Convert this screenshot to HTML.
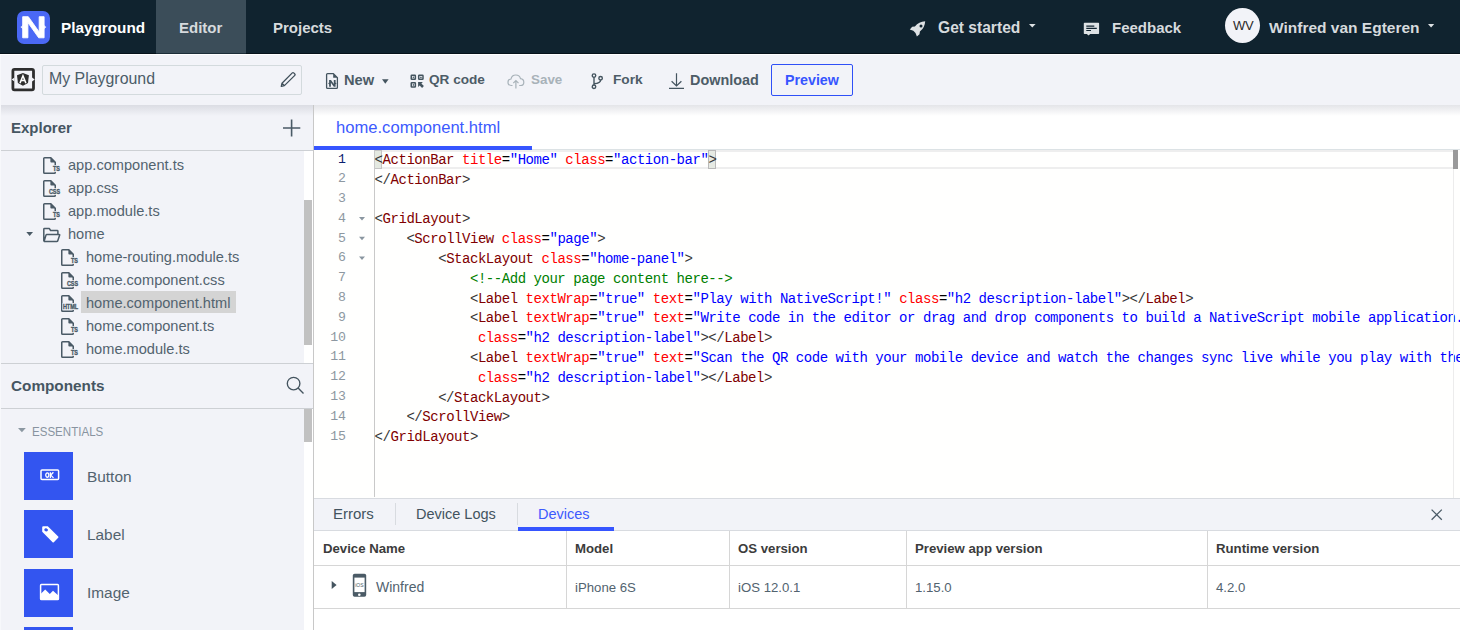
<!DOCTYPE html>
<html><head><meta charset="utf-8">
<style>
*{box-sizing:border-box;margin:0;padding:0}
html,body{width:1460px;height:630px;overflow:hidden;background:#f2f3f8;font-family:"Liberation Sans",sans-serif}
.a{position:absolute}
.t{position:absolute;white-space:pre;line-height:20px}
svg{position:absolute;overflow:visible}
.navtxt{color:#d6dadd;font-weight:700;font-size:15px}
.tbtxt{color:#4d5c67;font-weight:700;font-size:14.2px}
.sidehdr{color:#465662;font-weight:700;font-size:15px}
.file{color:#52636f;font-size:14.6px;position:absolute;white-space:pre;line-height:20px}
.code{font-family:"Liberation Mono",monospace;font-size:14px;letter-spacing:-0.455px;line-height:19.8px;white-space:pre;position:absolute}
.tg{color:#800000}.dl{color:#383838}.an{color:#ff0000}.av{color:#0000ff}.cm{color:#008000}.eq{color:#000}
.ln{font-family:"Liberation Mono",monospace;font-size:13.2px;line-height:19.8px;position:absolute;text-align:right;color:#8d98a1}
.tabtxt{font-size:14.5px;color:#43535f}
.th{font-size:13.2px;font-weight:700;color:#3c3c3c}
.td{font-size:13.2px;color:#52636f}
.vl{position:absolute;width:1px;background:#d6d6d6}
.hl{position:absolute;height:1px;background:#d6d6d6}
</style></head>
<body>
<!-- ============ HEADER ============ -->
<div class="a" style="left:0;top:0;width:1460px;height:53px;background:#10232f"></div>
<div class="a" style="left:0;top:53px;width:1460px;height:1px;background:#06121a"></div>
<div class="a" style="left:0;top:54px;width:1460px;height:1px;background:#fff"></div>
<div class="a" style="left:156px;top:0;width:90px;height:53px;background:#3b4d59"></div>
<div class="a" style="left:156px;top:53px;width:90px;height:1px;background:#1c2d38"></div>
<div class="a" style="left:17px;top:11px;width:33px;height:33px;border-radius:7px;background:#4a68f5"></div>
<svg style="left:17px;top:11px" width="33" height="33" viewBox="0 0 33 33">
  <path d="M5.7 5.7H11.3L22.2 21V5.7H27.1V26.8H21.7L10.9 11.6V26.8H5.7Z" fill="#fff" stroke="#fff" stroke-width="0.9" stroke-linejoin="round"/>
  <path d="M5.6 13.8Q5 15.6 3.4 16.1Q5 16.6 5.6 18.6Z M27.2 13.8Q27.8 15.6 29.4 16.1Q27.8 16.6 27.2 18.6Z" fill="#fff"/>
</svg>
<div class="t navtxt" style="left:61px;top:18px;color:#fff;font-size:15.3px">Playground</div>
<div class="t navtxt" style="left:179px;top:18px">Editor</div>
<div class="t navtxt" style="left:273px;top:18px">Projects</div>
<!-- rocket -->
<svg style="left:909px;top:21px" width="17" height="16" viewBox="0 0 17 16">
  <path d="M16.2 0.2Q15.9 6.6 10.9 10.6L10.5 13.2L7.9 15.6L6.5 11.9L4.3 9.7L0.8 8.4L3.2 5.8L5.9 5.5Q9.8 0.5 16.2 0.2Z" fill="#dde1e4"/>
  <circle cx="12" cy="4.9" r="1.5" fill="#10232f"/>
</svg>
<div class="t navtxt" style="left:938px;top:18px;font-size:15.6px">Get started</div>
<svg style="left:1029px;top:24px" width="7" height="4" viewBox="0 0 7 4"><path d="M0 0H6.6L3.3 3.6Z" fill="#dde1e4"/></svg>
<!-- feedback icon -->
<svg style="left:1083px;top:22px" width="17" height="14" viewBox="0 0 17 14">
  <path d="M1.5 0.8H15.4Q16.1 0.8 16.1 1.5V11.3Q16.1 12 15.4 12H7.2L5.5 13.5L3.9 12H1.5Q0.8 12 0.8 11.3V1.5Q0.8 0.8 1.5 0.8Z" fill="#dde1e4"/>
  <path d="M3.3 4.1H11.3M3.3 6.4H13.8M3.3 8.5H8" stroke="#10232f" stroke-width="1.1"/>
</svg>
<div class="t navtxt" style="left:1112px;top:18px">Feedback</div>
<div class="a" style="left:1225px;top:8px;width:35px;height:35px;border-radius:50%;background:#f2f3f8"></div>
<div class="t" style="left:1233px;top:15.5px;font-size:13px;color:#2a2a2a;letter-spacing:-0.3px">WV</div>
<div class="t navtxt" style="left:1269px;top:18px;font-size:15.5px">Winfred van Egteren</div>
<svg style="left:1428px;top:24px" width="7" height="4" viewBox="0 0 7 4"><path d="M0 0H6.2L3.1 3.6Z" fill="#dde1e4"/></svg>

<!-- ============ TOOLBAR ============ -->
<svg style="left:11px;top:68px" width="25" height="25" viewBox="0 0 25 25">
  <rect x="1.9" y="1.4" width="20.6" height="20.5" rx="1.6" fill="none" stroke="#2e2e2e" stroke-width="2.8"/>
  <path d="M0.7 11.6L3.4 9.6V13.6Z M23.7 11.6L21 9.6V13.6Z" fill="#f2f3f8"/>
  <path d="M11.95 5.1L17.9 7.2L17 15L11.95 17.8L6.9 15L6 7.2Z" fill="#2e2e2e"/>
  <path d="M9 15.1L11.95 7.8L14.9 15.1 M10.2 12.6H13.7" fill="none" stroke="#fff" stroke-width="1.5"/>
</svg>
<div class="a" style="left:42px;top:65px;width:260px;height:30px;border:1px solid #d3dadd;border-radius:2px;background:#f2f3f8"></div>
<div class="t" style="left:49px;top:69px;font-size:15.9px;color:#4b5c68">My Playground</div>
<svg style="left:279px;top:71px" width="18" height="17" viewBox="0 0 18 17">
  <path d="M2.3 15.3L3 12.2L13.3 1.9Q14 1.2 14.7 1.9L15.8 3Q16.5 3.7 15.8 4.4L5.4 14.6Z M3 12.2L5.4 14.6" fill="none" stroke="#3f4f5a" stroke-width="1.3" stroke-linejoin="round"/>
</svg>
<!-- New -->
<svg style="left:325px;top:72px" width="14" height="18" viewBox="0 0 14 18">
  <path d="M2.6 1.6H8.4L12.4 5.6V15.4Q12.4 16.4 11.4 16.4H2.6Q1.6 16.4 1.6 15.4V2.6Q1.6 1.6 2.6 1.6Z" fill="none" stroke="#44545f" stroke-width="1.3" stroke-linejoin="round"/>
  <path d="M8.2 1.6L12.4 5.8H8.2Z" fill="#44545f"/>
  <path d="M4.1 8H6L8.8 12.1V8H10.6V14.8H8.8L5.9 10.7V14.8H4.1Z M4.1 10.5L3.1 11.4L4.1 12.3Z M10.6 10.5L11.6 11.4L10.6 12.3Z" fill="#44545f"/>
</svg>
<div class="t tbtxt" style="left:344px;top:70px;font-size:14.7px">New</div>
<svg style="left:382px;top:78.5px" width="7" height="5" viewBox="0 0 7 5"><path d="M0 0.2H6.6L3.3 4.8Z" fill="#44545f"/></svg>
<!-- QR -->
<svg style="left:410px;top:74px" width="15" height="15" viewBox="0 0 15 15">
  <g fill="none" stroke="#44545f" stroke-width="1.5">
   <rect x="1.25" y="1.25" width="4.1" height="4.1" rx="0.6"/><rect x="8.7" y="1.25" width="4.3" height="4.1" rx="0.6"/><rect x="1.25" y="8.7" width="4.1" height="4.3" rx="0.6"/>
   <path d="M10 3.3H11.8 M3.3 10V11.9" stroke-width="1"/>
  </g>
  <circle cx="3.3" cy="3.3" r="0.75" fill="#44545f"/>
  <path d="M8.1 8.1H12.9L11.4 9.6L13.9 12.1L12.1 13.9L9.6 11.4L8.1 12.9Z" fill="#44545f"/>
</svg>
<div class="t tbtxt" style="left:429px;top:70px;font-size:13.6px">QR code</div>
<!-- Save -->
<svg style="left:507px;top:73px" width="18" height="16" viewBox="0 0 18 16">
  <path d="M5.5 12.5H4.5Q1 12.5 1 9.2Q1 6.3 4 6Q4.8 2 8.8 2Q12.6 2 13.5 5.6Q16.8 6 16.8 9.2Q16.8 12.5 13.5 12.5H12.2" fill="none" stroke="#a8b2b9" stroke-width="1.2"/>
  <path d="M8.9 15.5V7.6 M6.3 10.2L8.9 7.6L11.5 10.2" fill="none" stroke="#a8b2b9" stroke-width="1.2"/>
</svg>
<div class="t tbtxt" style="left:531px;top:70px;font-size:13.4px;color:#a8b2b9">Save</div>
<!-- Fork -->
<svg style="left:591px;top:72px" width="13" height="18" viewBox="0 0 13 18">
  <g fill="none" stroke="#44545f" stroke-width="1.4">
  <circle cx="3" cy="3.6" r="1.75"/><circle cx="3" cy="14.8" r="1.75"/><circle cx="9.6" cy="6.3" r="1.75"/>
  <path d="M3 5.3V13.1 M9.6 8Q9.6 11.4 3.1 11.6"/></g>
</svg>
<div class="t tbtxt" style="left:613px;top:70px;font-size:13.7px">Fork</div>
<!-- Download -->
<svg style="left:668px;top:72px" width="17" height="18" viewBox="0 0 17 18">
  <path d="M8.5 1.2V14 M3.6 9.2L8.5 14L13.4 9.2 M1 16.4H16" fill="none" stroke="#44545f" stroke-width="1.2"/>
</svg>
<div class="t tbtxt" style="left:690px;top:70px;font-size:14.4px">Download</div>
<div class="a" style="left:771px;top:64px;width:82px;height:32px;border:1px solid #2f50f7;border-radius:2px"></div>
<div class="t tbtxt" style="left:785px;top:70px;font-size:14.26px;color:#3655ff">Preview</div>
<div class="a" style="left:0;top:105px;width:1460px;height:11px;background:linear-gradient(rgba(200,202,210,0.55),rgba(242,243,248,0))"></div>

<!-- ============ SIDEBAR ============ -->
<div class="t sidehdr" style="left:11px;top:118px">Explorer</div>
<svg style="left:283px;top:119px" width="18" height="18" viewBox="0 0 18 18"><path d="M8.6 0.5V17.5 M0 9H17.3" stroke="#4a5a66" stroke-width="1.6"/></svg>
<div class="hl" style="left:0;top:150px;width:313px;background:#cdd0d4"></div>
<!-- tree -->
<div class="a" style="left:304px;top:151px;width:9px;height:212px;background:#fff"></div>
<div class="a" style="left:304px;top:200px;width:8px;height:145px;background:#c1c1c1"></div>
<div class="a" style="left:81px;top:291px;width:155px;height:22px;background:#d4d4d4"></div>
<svg style="left:43.2px;top:157px" width="18" height="18" viewBox="0 0 18 18">
  <path d="M12.25 9V5.2L7.8 0.75H1.6Q0.75 0.75 0.75 1.6V15.4Q0.75 16.25 1.6 16.25H11.4Q12.25 16.25 12.25 15.4V14.5" fill="none" stroke="#4a5a66" stroke-width="1.5"/>
  <path d="M7.4 0.3L12.7 5.6H8.2Q7.4 5.6 7.4 4.8Z" fill="#4a5a66"/>
  <text x="10.0" y="13.9" textLength="7.0" lengthAdjust="spacingAndGlyphs" font-family="Liberation Sans" font-weight="700" font-size="6.4" fill="#f2f3f8" stroke="#f2f3f8" stroke-width="1.8">TS</text>
  <text x="10.0" y="13.9" textLength="7.0" lengthAdjust="spacingAndGlyphs" font-family="Liberation Sans" font-weight="700" font-size="6.4" fill="#4a5a66" stroke="#4a5a66" stroke-width="0.35">TS</text>
</svg>
<div class="file" style="left:68px;top:155px">app.component.ts</div>
<svg style="left:43.2px;top:180px" width="18" height="18" viewBox="0 0 18 18">
  <path d="M12.25 9V5.2L7.8 0.75H1.6Q0.75 0.75 0.75 1.6V15.4Q0.75 16.25 1.6 16.25H11.4Q12.25 16.25 12.25 15.4V14.5" fill="none" stroke="#4a5a66" stroke-width="1.5"/>
  <path d="M7.4 0.3L12.7 5.6H8.2Q7.4 5.6 7.4 4.8Z" fill="#4a5a66"/>
  <text x="5.9" y="14.0" textLength="11.2" lengthAdjust="spacingAndGlyphs" font-family="Liberation Sans" font-weight="700" font-size="6.4" fill="#f2f3f8" stroke="#f2f3f8" stroke-width="1.8">CSS</text>
  <text x="5.9" y="14.0" textLength="11.2" lengthAdjust="spacingAndGlyphs" font-family="Liberation Sans" font-weight="700" font-size="6.4" fill="#4a5a66" stroke="#4a5a66" stroke-width="0.35">CSS</text>
</svg>
<div class="file" style="left:68px;top:178px">app.css</div>
<svg style="left:43.2px;top:203px" width="18" height="18" viewBox="0 0 18 18">
  <path d="M12.25 9V5.2L7.8 0.75H1.6Q0.75 0.75 0.75 1.6V15.4Q0.75 16.25 1.6 16.25H11.4Q12.25 16.25 12.25 15.4V14.5" fill="none" stroke="#4a5a66" stroke-width="1.5"/>
  <path d="M7.4 0.3L12.7 5.6H8.2Q7.4 5.6 7.4 4.8Z" fill="#4a5a66"/>
  <text x="10.0" y="13.9" textLength="7.0" lengthAdjust="spacingAndGlyphs" font-family="Liberation Sans" font-weight="700" font-size="6.4" fill="#f2f3f8" stroke="#f2f3f8" stroke-width="1.8">TS</text>
  <text x="10.0" y="13.9" textLength="7.0" lengthAdjust="spacingAndGlyphs" font-family="Liberation Sans" font-weight="700" font-size="6.4" fill="#4a5a66" stroke="#4a5a66" stroke-width="0.35">TS</text>
</svg>
<div class="file" style="left:68px;top:201px">app.module.ts</div>
<svg style="left:26px;top:232px" width="8" height="5" viewBox="0 0 8 5"><path d="M0.3 0H7L3.65 4Z" fill="#4a5a66"/></svg>
<svg style="left:43px;top:228.4px" width="19" height="15" viewBox="0 0 19 15">
  <path d="M0.8 13.1V1.3Q0.8 0.6 1.5 0.6H6.4L7.6 2.5H14.2Q14.9 2.5 14.9 3.2V6.3 M1.1 13.2L3 7.1Q3.2 6.5 3.9 6.5H16.2Q16.9 6.5 16.7 7.1L14.6 13.2Q14.4 13.6 13.8 13.6H1.6Q1 13.6 1.1 13.2Z" fill="none" stroke="#4a5a66" stroke-width="1.5" stroke-linejoin="round"/>
</svg>
<div class="file" style="left:68px;top:224px">home</div>
<svg style="left:61px;top:249px" width="18" height="18" viewBox="0 0 18 18">
  <path d="M12.25 9V5.2L7.8 0.75H1.6Q0.75 0.75 0.75 1.6V15.4Q0.75 16.25 1.6 16.25H11.4Q12.25 16.25 12.25 15.4V14.5" fill="none" stroke="#4a5a66" stroke-width="1.5"/>
  <path d="M7.4 0.3L12.7 5.6H8.2Q7.4 5.6 7.4 4.8Z" fill="#4a5a66"/>
  <text x="10.0" y="13.9" textLength="7.0" lengthAdjust="spacingAndGlyphs" font-family="Liberation Sans" font-weight="700" font-size="6.4" fill="#f2f3f8" stroke="#f2f3f8" stroke-width="1.8">TS</text>
  <text x="10.0" y="13.9" textLength="7.0" lengthAdjust="spacingAndGlyphs" font-family="Liberation Sans" font-weight="700" font-size="6.4" fill="#4a5a66" stroke="#4a5a66" stroke-width="0.35">TS</text>
</svg>
<div class="file" style="left:86px;top:247px">home-routing.module.ts</div>
<svg style="left:61px;top:272px" width="18" height="18" viewBox="0 0 18 18">
  <path d="M12.25 9V5.2L7.8 0.75H1.6Q0.75 0.75 0.75 1.6V15.4Q0.75 16.25 1.6 16.25H11.4Q12.25 16.25 12.25 15.4V14.5" fill="none" stroke="#4a5a66" stroke-width="1.5"/>
  <path d="M7.4 0.3L12.7 5.6H8.2Q7.4 5.6 7.4 4.8Z" fill="#4a5a66"/>
  <text x="5.9" y="14.0" textLength="11.2" lengthAdjust="spacingAndGlyphs" font-family="Liberation Sans" font-weight="700" font-size="6.4" fill="#f2f3f8" stroke="#f2f3f8" stroke-width="1.8">CSS</text>
  <text x="5.9" y="14.0" textLength="11.2" lengthAdjust="spacingAndGlyphs" font-family="Liberation Sans" font-weight="700" font-size="6.4" fill="#4a5a66" stroke="#4a5a66" stroke-width="0.35">CSS</text>
</svg>
<div class="file" style="left:86px;top:270px">home.component.css</div>
<svg style="left:61px;top:295px" width="18" height="18" viewBox="0 0 18 18">
  <path d="M12.25 9V5.2L7.8 0.75H1.6Q0.75 0.75 0.75 1.6V15.4Q0.75 16.25 1.6 16.25H11.4Q12.25 16.25 12.25 15.4V14.5" fill="none" stroke="#4a5a66" stroke-width="1.5"/>
  <path d="M7.4 0.3L12.7 5.6H8.2Q7.4 5.6 7.4 4.8Z" fill="#4a5a66"/>
  <text x="1.9" y="13.8" textLength="15.2" lengthAdjust="spacingAndGlyphs" font-family="Liberation Sans" font-weight="700" font-size="6.4" fill="#f2f3f8" stroke="#f2f3f8" stroke-width="1.8">HTML</text>
  <text x="1.9" y="13.8" textLength="15.2" lengthAdjust="spacingAndGlyphs" font-family="Liberation Sans" font-weight="700" font-size="6.4" fill="#4a5a66" stroke="#4a5a66" stroke-width="0.35">HTML</text>
</svg>
<div class="file" style="left:86px;top:293px">home.component.html</div>
<svg style="left:61px;top:318px" width="18" height="18" viewBox="0 0 18 18">
  <path d="M12.25 9V5.2L7.8 0.75H1.6Q0.75 0.75 0.75 1.6V15.4Q0.75 16.25 1.6 16.25H11.4Q12.25 16.25 12.25 15.4V14.5" fill="none" stroke="#4a5a66" stroke-width="1.5"/>
  <path d="M7.4 0.3L12.7 5.6H8.2Q7.4 5.6 7.4 4.8Z" fill="#4a5a66"/>
  <text x="10.0" y="13.9" textLength="7.0" lengthAdjust="spacingAndGlyphs" font-family="Liberation Sans" font-weight="700" font-size="6.4" fill="#f2f3f8" stroke="#f2f3f8" stroke-width="1.8">TS</text>
  <text x="10.0" y="13.9" textLength="7.0" lengthAdjust="spacingAndGlyphs" font-family="Liberation Sans" font-weight="700" font-size="6.4" fill="#4a5a66" stroke="#4a5a66" stroke-width="0.35">TS</text>
</svg>
<div class="file" style="left:86px;top:316px">home.component.ts</div>
<svg style="left:61px;top:341px" width="18" height="18" viewBox="0 0 18 18">
  <path d="M12.25 9V5.2L7.8 0.75H1.6Q0.75 0.75 0.75 1.6V15.4Q0.75 16.25 1.6 16.25H11.4Q12.25 16.25 12.25 15.4V14.5" fill="none" stroke="#4a5a66" stroke-width="1.5"/>
  <path d="M7.4 0.3L12.7 5.6H8.2Q7.4 5.6 7.4 4.8Z" fill="#4a5a66"/>
  <text x="10.0" y="13.9" textLength="7.0" lengthAdjust="spacingAndGlyphs" font-family="Liberation Sans" font-weight="700" font-size="6.4" fill="#f2f3f8" stroke="#f2f3f8" stroke-width="1.8">TS</text>
  <text x="10.0" y="13.9" textLength="7.0" lengthAdjust="spacingAndGlyphs" font-family="Liberation Sans" font-weight="700" font-size="6.4" fill="#4a5a66" stroke="#4a5a66" stroke-width="0.35">TS</text>
</svg>
<div class="file" style="left:86px;top:339px">home.module.ts</div>
<div class="hl" style="left:0;top:363px;width:313px;background:#cdd0d4"></div>
<div class="t sidehdr" style="left:11px;top:376px;font-size:15.3px">Components</div>
<svg style="left:285.5px;top:376px" width="19" height="19" viewBox="0 0 19 19"><circle cx="7.6" cy="7.6" r="6.3" fill="none" stroke="#44545f" stroke-width="1.35"/><path d="M12.1 12.1L17.5 17.5" stroke="#44545f" stroke-width="1.35"/></svg>
<div class="hl" style="left:0;top:408px;width:313px;background:#cdd0d4"></div>
<div class="a" style="left:304px;top:409px;width:9px;height:221px;background:#fff"></div>
<div class="a" style="left:304px;top:409px;width:8px;height:33px;background:#c1c1c1"></div>
<svg style="left:18px;top:428px" width="8" height="5" viewBox="0 0 8 5"><path d="M0 0H7.8L3.9 4.2Z" fill="#8c98a2"/></svg>
<div class="t" style="left:32.3px;top:421.5px;color:#8893a0;font-size:13.6px;transform:scaleX(0.85);transform-origin:0 0">ESSENTIALS</div>
<!-- tiles -->
<div class="a" style="left:24px;top:452px;width:49px;height:48px;background:#3355f0"></div>
<div class="a" style="left:24px;top:510px;width:49px;height:48px;background:#3355f0"></div>
<div class="a" style="left:24px;top:569px;width:49px;height:48px;background:#3355f0"></div>
<div class="a" style="left:24px;top:627px;width:49px;height:48px;background:#3355f0"></div>
<svg style="left:40px;top:469px" width="20" height="12" viewBox="0 0 20 12">
  <rect x="1" y="1" width="17.6" height="9.4" rx="1" fill="none" stroke="#fff" stroke-width="1.5"/>
  <ellipse cx="7.3" cy="6.1" rx="1.55" ry="2.15" fill="none" stroke="#fff" stroke-width="1.3"/><path d="M10.4 3.3V8.9 M13.4 3.3L10.8 6.1L13.5 8.9" fill="none" stroke="#fff" stroke-width="1.3"/>
</svg>
<svg style="left:41px;top:525px" width="19" height="19" viewBox="0 0 19 19">
  <path d="M2.2 1.2H6.8L17.2 11.6Q17.8 12.2 17.2 12.8L12.8 17.2Q12.2 17.8 11.6 17.2L1.2 6.8V2.2Q1.2 1.2 2.2 1.2Z M4.8 3.2A1.5 1.5 0 1 0 4.81 3.2Z" fill="#fff" fill-rule="evenodd"/>
  <circle cx="5.5" cy="5.1" r="1.4" fill="#3355f0"/>
</svg>
<svg style="left:39px;top:583px" width="21" height="18" viewBox="0 0 21 18">
  <rect x="1.6" y="1.6" width="17.8" height="15" rx="0.8" fill="none" stroke="#fff" stroke-width="1.5"/>
  <path d="M1.6 11L6.2 6.4L10.8 11L14 7.8L19.4 12.6V16.6H1.6Z" fill="#fff"/>
</svg>
<div class="t" style="left:87px;top:467px;font-size:15.4px;color:#52636f">Button</div>
<div class="t" style="left:87px;top:525px;font-size:15.4px;color:#52636f">Label</div>
<div class="t" style="left:87px;top:583px;font-size:15.4px;color:#52636f">Image</div>
<div class="vl" style="left:313px;top:105px;height:525px;background:#c8c8c8"></div>

<!-- ============ EDITOR ============ -->
<div class="a" style="left:314px;top:105px;width:1146px;height:44px;background:#fff"></div>
<div class="a" style="left:314px;top:105px;width:1146px;height:11px;background:linear-gradient(rgba(200,202,210,0.5),rgba(255,255,255,0))"></div>
<div class="t" style="left:336px;top:118px;font-size:16.6px;color:#3d5afe">home.component.html</div>
<div class="hl" style="left:532px;top:149px;width:928px;background:#dce2e5"></div>
<div class="a" style="left:314px;top:150px;width:1146px;height:348px;background:#fffffe"></div>
<!-- current line -->
<div class="a" style="left:374px;top:150px;width:1079px;height:19px;border-top:2px solid #eeeeee;border-bottom:2px solid #eeeeee"></div>
<div class="a" style="left:374px;top:150px;width:8px;height:19px;background:#e4e9e1;border:1px solid #c4c4c4"></div>
<div class="a" style="left:708px;top:150px;width:8px;height:19px;background:#e6eae3;border:1px solid #b9b9b9"></div>
<div class="ln" style="left:314px;top:149.5px;width:32px"><div style="color:#0b216f">1</div><div>2</div><div>3</div><div>4</div><div>5</div><div>6</div><div>7</div><div>8</div><div>9</div><div>10</div><div>11</div><div>12</div><div>13</div><div>14</div><div>15</div></div>
<svg style="left:358px;top:216px" width="8" height="45" viewBox="0 0 8 45">
  <path d="M1 1H7L4 4.5Z M1 20.8H7L4 24.3Z M1 40.6H7L4 44.1Z" fill="#8a96a0"/>
</svg>
<div class="vl" style="left:374px;top:150px;height:347px;background:#c9c9c9"></div>
<div class="code" style="left:374.6px;top:151px"><span class="dl">&lt;</span><span class="tg">ActionBar</span> <span class="an">title</span><span class="eq">=</span><span class="av">"Home"</span> <span class="an">class</span><span class="eq">=</span><span class="av">"action-bar"</span><span class="dl">&gt;</span>
<span class="dl">&lt;/</span><span class="tg">ActionBar</span><span class="dl">&gt;</span>

<span class="dl">&lt;</span><span class="tg">GridLayout</span><span class="dl">&gt;</span>
    <span class="dl">&lt;</span><span class="tg">ScrollView</span> <span class="an">class</span><span class="eq">=</span><span class="av">"page"</span><span class="dl">&gt;</span>
        <span class="dl">&lt;</span><span class="tg">StackLayout</span> <span class="an">class</span><span class="eq">=</span><span class="av">"home-panel"</span><span class="dl">&gt;</span>
            <span class="cm">&lt;!--Add your page content here--&gt;</span>
            <span class="dl">&lt;</span><span class="tg">Label</span> <span class="an">textWrap</span><span class="eq">=</span><span class="av">"true"</span> <span class="an">text</span><span class="eq">=</span><span class="av">"Play with NativeScript!"</span> <span class="an">class</span><span class="eq">=</span><span class="av">"h2 description-label"</span><span class="dl">&gt;&lt;/</span><span class="tg">Label</span><span class="dl">&gt;</span>
            <span class="dl">&lt;</span><span class="tg">Label</span> <span class="an">textWrap</span><span class="eq">=</span><span class="av">"true"</span> <span class="an">text</span><span class="eq">=</span><span class="av">"Write code in the editor or drag and drop components to build a NativeScript mobile application."</span>
             <span class="an">class</span><span class="eq">=</span><span class="av">"h2 description-label"</span><span class="dl">&gt;&lt;/</span><span class="tg">Label</span><span class="dl">&gt;</span>
            <span class="dl">&lt;</span><span class="tg">Label</span> <span class="an">textWrap</span><span class="eq">=</span><span class="av">"true"</span> <span class="an">text</span><span class="eq">=</span><span class="av">"Scan the QR code with your mobile device and watch the changes sync live while you play with the app."</span>
             <span class="an">class</span><span class="eq">=</span><span class="av">"h2 description-label"</span><span class="dl">&gt;&lt;/</span><span class="tg">Label</span><span class="dl">&gt;</span>
        <span class="dl">&lt;/</span><span class="tg">StackLayout</span><span class="dl">&gt;</span>
    <span class="dl">&lt;/</span><span class="tg">ScrollView</span><span class="dl">&gt;</span>
<span class="dl">&lt;/</span><span class="tg">GridLayout</span><span class="dl">&gt;</span></div>
<div class="vl" style="left:1453px;top:150px;height:348px;background:#ececec"></div>
<div class="a" style="left:314px;top:146px;width:218px;height:4px;background:#3655ff"></div>

<div class="a" style="left:1453px;top:150px;width:5px;height:19px;background:#9a9a9a"></div>

<!-- ============ PANEL ============ -->
<div class="a" style="left:314px;top:498px;width:1146px;height:132px;background:#fff"></div>
<div class="a" style="left:314px;top:499px;width:1146px;height:31px;background:#f2f3f8"></div>
<div class="hl" style="left:314px;top:498px;width:1146px;background:#d8dbe0"></div>
<div class="hl" style="left:314px;top:530px;width:1146px;background:#d8dbe0"></div>
<div class="t tabtxt" style="left:333px;top:504px;font-size:15px">Errors</div>
<div class="vl" style="left:395px;top:503px;height:22px;background:#d8dbe0"></div>
<div class="t tabtxt" style="left:416px;top:504px">Device Logs</div>
<div class="vl" style="left:517px;top:503px;height:22px;background:#d8dbe0"></div>
<div class="t tabtxt" style="left:538px;top:504px;color:#3d5afe">Devices</div>
<div class="a" style="left:518px;top:527px;width:96px;height:4px;background:#3655ff"></div>
<svg style="left:1431px;top:509px" width="12" height="12" viewBox="0 0 12 12"><path d="M0.6 0.6L10.8 10.8M10.8 0.6L0.6 10.8" stroke="#4a5a66" stroke-width="1.3"/></svg>
<div class="t th" style="left:323px;top:539px">Device Name</div>
<div class="t th" style="left:575px;top:539px">Model</div>
<div class="t th" style="left:738px;top:539px">OS version</div>
<div class="t th" style="left:915px;top:539px">Preview app version</div>
<div class="t th" style="left:1216px;top:539px">Runtime version</div>
<div class="hl" style="left:314px;top:565px;width:1146px"></div>
<div class="hl" style="left:314px;top:608px;width:1146px"></div>
<div class="vl" style="left:566px;top:531px;height:77px"></div>
<div class="vl" style="left:729px;top:531px;height:77px"></div>
<div class="vl" style="left:906px;top:531px;height:77px"></div>
<div class="vl" style="left:1207px;top:531px;height:77px"></div>
<svg style="left:331px;top:580px" width="6" height="10" viewBox="0 0 6 10"><path d="M0.7 1L5.6 5L0.7 9Z" fill="#44545f"/></svg>
<svg style="left:352px;top:573px" width="15" height="25" viewBox="0 0 15 25">
  <rect x="0.8" y="0.8" width="13.4" height="23" rx="1.8" fill="#4b5b66"/>
  <rect x="2.4" y="4.6" width="10.2" height="14.5" fill="#fff"/>
  <circle cx="7.3" cy="21.8" r="1.3" fill="#fff"/>
  <text x="3.2" y="14" textLength="8.4" lengthAdjust="spacingAndGlyphs" font-family="Liberation Sans" font-size="5.6" fill="#4b5b66">iOS</text>
</svg>
<div class="t td" style="left:376px;top:577px;font-size:14px">Winfred</div>
<div class="t td" style="left:575px;top:578px">iPhone 6S</div>
<div class="t td" style="left:738px;top:578px">iOS 12.0.1</div>
<div class="t td" style="left:915px;top:578px">1.15.0</div>
<div class="t td" style="left:1216px;top:578px">4.2.0</div>
<div class="vl" style="left:313px;top:498px;height:132px;background:#c8c8c8"></div>
<div class="a" style="left:0;top:55px;width:1px;height:575px;background:#f7f8fb"></div>
</body></html>
